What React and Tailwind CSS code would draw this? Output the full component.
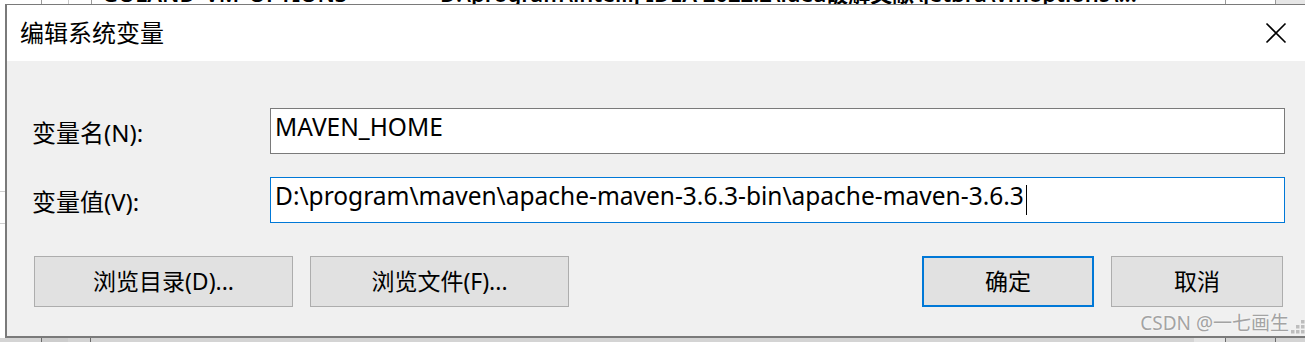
import React from 'react'

// Windows "编辑系统变量" dialog, sitting on top of a partly visible window behind it.

const FONT = "font-['Noto_Sans','Noto_Sans_CJK_SC',sans-serif]"

// The strip of the window behind the dialog that peeks out above its top edge.
// Only the bottom few pixels of the text are visible.
function TopStrip() {
  return (
    <div className="h-[4px] shrink-0 overflow-hidden bg-white flex">
      <div className="w-[41px] shrink-0" />
      <div className="w-px h-full bg-[#9a9a9a] shrink-0" />
      <div className="w-[26px] shrink-0" />
      <div className="w-px h-full bg-[#c8c8c8] shrink-0" />
      <div className="w-[22px] shrink-0" />
      <div className="w-px h-full bg-[#9a9a9a] shrink-0" />
      <div className="flex-1 flex text-[22px] leading-[22px] -mt-[18px] font-semibold text-black whitespace-nowrap">
        <span className="ml-[10px] w-[338px]">GOLAND_VM_OPTIONS</span>
        <span>D:\program\intellij IDEA 2022.2\idea破解文献\jetbra\vmoptions\...</span>
      </div>
      <div className="w-px h-full bg-[#9a9a9a] shrink-0" />
      <div className="w-[49px] shrink-0" />
      <div className="w-px h-full bg-[#9a9a9a] shrink-0" />
      <div className="w-[29px] shrink-0 bg-[#e6e6e6]" />
    </div>
  )
}

function LeftStrip() {
  return (
    <div className="w-[5px] shrink-0 bg-white flex flex-col">
      <div className="h-[187px]" />
      <div className="h-px bg-[#cfcfcf]" />
      <div className="h-[31px]" />
      <div className="h-px bg-[#cfcfcf]" />
    </div>
  )
}

function BottomStrip() {
  return (
    <div className="h-[4px] shrink-0 bg-[#d4d4d4] flex">
      <div className="w-[41px] shrink-0" />
      <div className="w-px bg-[#6a6a6a] shrink-0" />
      <div className="w-[26px] shrink-0 bg-[#cdcdcd]" />
      <div className="w-[22px] shrink-0" />
      <div className="w-px bg-[#6a6a6a] shrink-0" />
      <div className="flex-1" />
      <div className="w-[31px] shrink-0 bg-[#e4e4e4]" />
      <div className="w-px bg-[#6a6a6a] shrink-0" />
      <div className="w-[49px] shrink-0" />
      <div className="w-px bg-[#6a6a6a] shrink-0" />
      <div className="w-[29px] shrink-0" />
    </div>
  )
}

function CloseIcon() {
  return (
    <svg width="22" height="22" viewBox="0 0 22 22" className="block">
      <path d="M1.5 1.5 L20.5 20.5 M20.5 1.5 L1.5 20.5" stroke="#000" strokeWidth="1.6" fill="none" />
    </svg>
  )
}

// lower-right resize grip: a little triangle of dots
function Grip() {
  const dots = [
    [10, 0],
    [5, 5], [10, 5],
    [0, 10], [5, 10], [10, 10],
  ]
  return (
    <svg width="14" height="14" viewBox="0 0 14 14" className="block">
      {dots.map(([x, y], i) => (
        <rect key={i} x={x} y={y} width="3.5" height="3.5" fill="#bdbdbd" />
      ))}
    </svg>
  )
}

function Field({ label, value, focused }) {
  return (
    <div className="flex items-center h-[46px]">
      <div className="w-[238px] shrink-0 text-[24px] text-black pt-[3px]">{label}</div>
      <div
        className={`flex-1 h-full bg-white border flex items-center pl-[4px] pb-[7px] ${focused ? 'border-[#0078d7]' : 'border-[#7a7a7a]'}`}
      >
        <span className="text-[24.5px] text-black whitespace-nowrap">{value}</span>
        {focused && <span className="w-px h-[30px] bg-black ml-[2px] mt-[6px]" />}
      </div>
    </div>
  )
}

function Button({ children, primary, wide }) {
  return (
    <button
      className={`h-[51px] bg-[#e1e1e1] text-[23px] text-black flex items-center justify-center ${wide ? 'w-[259px]' : 'w-[172px]'} ${primary ? 'border-2 border-[#0078d7]' : 'border border-[#adadad]'}`}
    >
      {children}
    </button>
  )
}

export default function App() {
  return (
    <div className={`w-[1305px] h-[342px] overflow-hidden bg-white flex flex-col ${FONT}`}>
      <TopStrip />
      <div className="flex flex-1 min-h-0">
        <LeftStrip />
        <div className="relative flex-1 flex flex-col border-t border-l-2 border-b-2 border-[#7a7a7a]">
          {/* title bar */}
          <div className="h-[56px] shrink-0 bg-white flex items-center justify-between pl-[13px] pr-[18px]">
            <span className="text-[24px] text-black">编辑系统变量</span>
            <CloseIcon />
          </div>

          {/* body */}
          <div className="flex-1 bg-[#f0f0f0] flex flex-col pt-[47px] pl-[25px] pr-[20px]">
            <Field label="变量名(N):" value="MAVEN_HOME" />
            <div className="h-[23px]" />
            <Field
              label="变量值(V):"
              value="D:\program\maven\apache-maven-3.6.3-bin\apache-maven-3.6.3"
              focused
            />
            <div className="flex justify-between mt-[33px] ml-[2px] mr-[2px]">
              <div className="flex gap-[17px]">
                <Button wide>浏览目录(D)...</Button>
                <Button wide>浏览文件(F)...</Button>
              </div>
              <div className="flex gap-[17px]">
                <Button primary>确定</Button>
                <Button>取消</Button>
              </div>
            </div>
          </div>

          {/* CSDN watermark + resize grip over the bottom-right corner */}
          <div className="absolute right-0 bottom-[2px] flex items-end gap-[2px]">
            <span className="text-[19px] leading-[22px] text-[#a3a3a3] [text-shadow:0_0_2px_#fff]">
              CSDN @一七画生
            </span>
            <Grip />
          </div>
        </div>
      </div>
      <BottomStrip />
    </div>
  )
}
